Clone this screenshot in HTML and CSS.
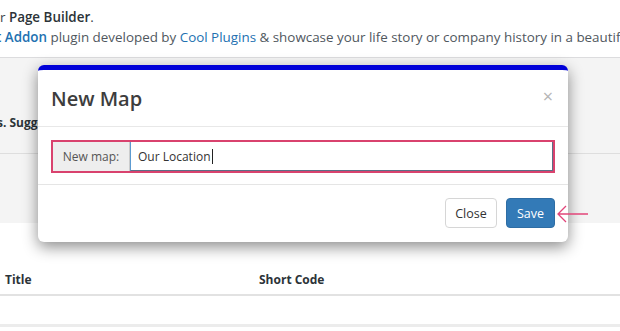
FILE: index.html
```html
<!DOCTYPE html>
<html>
<head>
<meta charset="utf-8">
<link rel="stylesheet" href="styles.css">
</head>
<body>
<div class="page">
  <div class="notice">
    <p class="line"><span class="cut1">r </span><strong>Page Builder</strong>.</p>
    <p class="line line2"><strong class="link">t Addon</strong> plugin developed by <span class="link">Cool Plugins</span> &amp; showcase your life story or company history in a beautiful way.</p>
  </div>
  <div class="panel">
    <div class="panel-top"><span class="hint">s. Suggestions</span></div>
    <div class="panel-bottom"></div>
  </div>
  <div class="table">
    <div class="thead">
      <span class="col-title">Title</span>
      <span class="col-code">Short Code</span>
    </div>
    <div class="trow"></div>
  </div>

  <div class="modal">
    <div class="modal-header">
      <h4 class="modal-title">New Map</h4>
      <span class="close-x">×</span>
    </div>
    <div class="modal-body">
      <div class="input-group">
        <span class="addon">New map:</span>
        <div class="input"><span class="value">Our Location</span><span class="caret"></span></div>
      </div>
    </div>
    <div class="modal-footer">
      <button class="btn btn-default">Close</button>
      <button class="btn btn-primary">Save</button>
    </div>
  </div>
  <svg class="arrow" width="34" height="20" viewBox="0 0 34 20">
    <path d="M2 10 H32 M10 2 L2 10 L10 18" fill="none" stroke="#e2457a" stroke-width="1.3"/>
  </svg>
</div>
</body>
</html>
```
FILE: styles.css
```css
* { box-sizing: border-box; }
html, body { margin: 0; padding: 0; }
body {
  width: 620px;
  height: 331px;
  overflow: hidden;
  background: #fff;
  font-family: "Open Sans", "Noto Sans", sans-serif;
  color: #3c434a;
}
.page { position: relative; width: 620px; height: 331px; overflow: hidden; }

.notice {
  height: 58px;
  padding-top: 7px;
  border-bottom: 1px solid #dcdcde;
  white-space: nowrap;
}
.line { margin: 0; font-size: 13.4px; line-height: 20px; }
.line strong { font-weight: 600; color: #2c3338; }
.line2 { margin-left: -4px; color: #50575e; }
.link { color: #2271b1; }
.line strong.link { color: #2271b1; }

.panel { background: #f4f4f4; }
.panel-top {
  height: 96px;
  border-bottom: 1px solid #dedede;
  padding-top: 52px;
}
.hint { font-size: 12px; font-weight: 700; color: #2c3338; margin-left: -3px; }
.panel-bottom { height: 69px; }

.table { margin-top: 42px; }
.thead {
  height: 31px;
  display: flex;
  align-items: center;
  border-bottom: 2px solid #e2e2e2;
  font-size: 12px;
  font-weight: 700;
  color: #2c3338;
}
.col-title { width: 259px; padding-left: 5px; }
.trow { height: 31px; border-bottom: 3px solid #ececec; }

.modal {
  position: absolute;
  left: 38px;
  top: 65px;
  width: 530px;
  height: 177px;
  background: #fff;
  border-top: 5px solid #0000d8;
  border-radius: 6px;
  box-shadow: 0 5px 15px rgba(0,0,0,.45);
}
.modal-header {
  height: 57px;
  display: flex;
  align-items: center;
  justify-content: space-between;
  padding: 0 15px 0 13px;
  border-bottom: 1px solid #e8e8e8;
}
.modal-title {
  margin: 0;
  font-size: 20px;
  font-weight: 600;
  color: #3d3d3d;
}
.close-x { font-size: 18px; color: #b5b5b5; line-height: 1; margin-top: -4px; }

.modal-body {
  height: 58px;
  padding: 13px 13px 0 13px;
  border-bottom: 1px solid #e5e5e5;
}
.input-group {
  display: flex;
  height: 33px;
  border: 2px solid #d9426e;
}
.addon {
  width: 77px;
  background: #eee;
  color: #555;
  font-size: 12px;
  display: flex;
  align-items: center;
  justify-content: center;
  border-right: 1px solid #ccc;
}
.input {
  flex: 1;
  display: flex;
  align-items: center;
  padding-left: 7px;
  border-left: 1px solid #5c9bd1;
  border-right: 1px solid #5b6f86;
  border-bottom: 1px solid #5b6f86;
  font-size: 12px;
  color: #333;
}
.caret { display: inline-block; width: 1px; height: 15px; background: #222; margin-left: 1px; }

.modal-footer {
  display: flex;
  justify-content: flex-end;
  gap: 9px;
  padding: 13px 13px 0 0;
}
.btn {
  height: 30px;
  border-radius: 4px;
  font-family: inherit;
  font-size: 12.5px;
  padding: 0;
  cursor: pointer;
}
.btn-default { background: #fff; border: 1px solid #d6d6d6; color: #333; width: 52px; }
.btn-primary { background: #337ab7; border: 1px solid #2e6da4; color: #fff; width: 49px; }

.arrow { position: absolute; left: 556px; top: 204px; }
```
